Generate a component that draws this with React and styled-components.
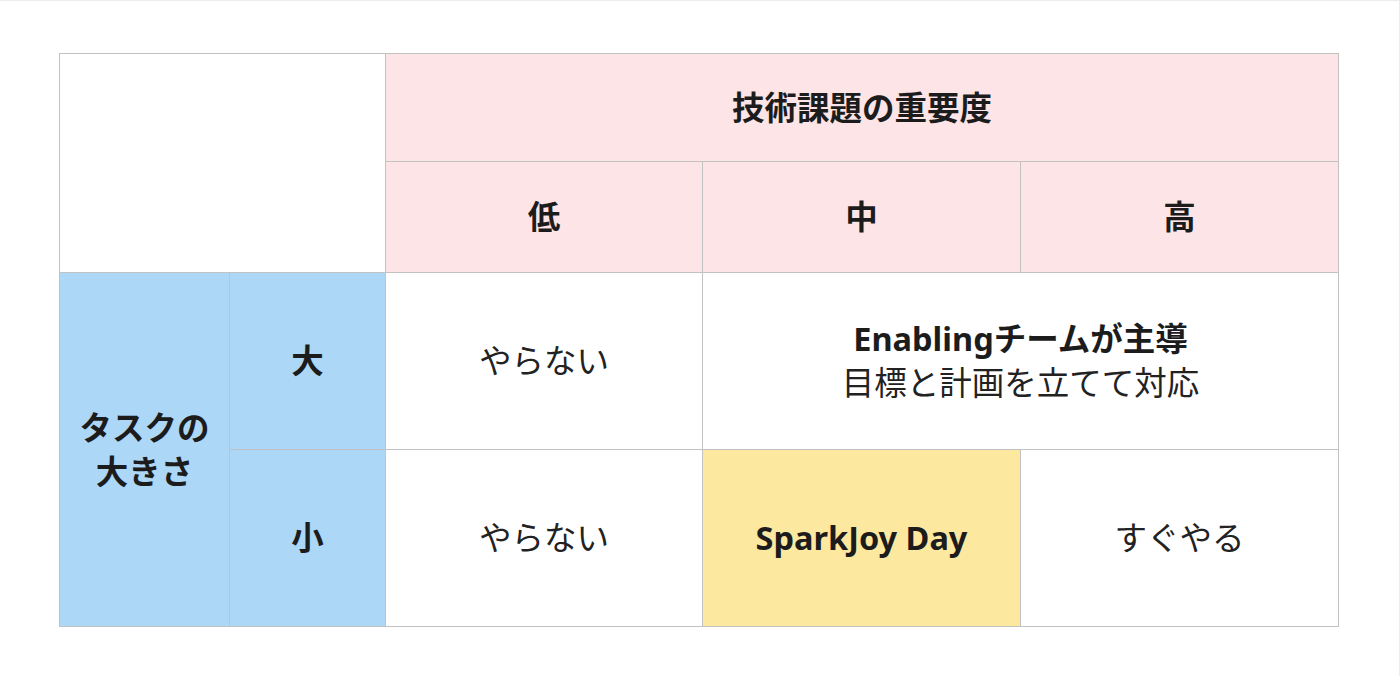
import React from 'react'
import styled, { createGlobalStyle } from 'styled-components'

const GlobalStyle = createGlobalStyle`
	html, body {
		margin: 0;
		padding: 0;
		background: #fff;
	}
	body {
		font-family: 'Noto Sans', 'Noto Sans CJK JP', sans-serif;
		color: #222;
	}
`

const Page = styled.div`
	width: 1400px;
	height: 676px;
	box-sizing: border-box;
	border-top: 1px solid #ececec;
	border-right: 1px solid #ececec;
	padding: 52px 0 0 59px;
`

const Matrix = styled.div`
	display: grid;
	grid-template-columns: 169px 155px 316px 317px 317px;
	grid-template-rows: 107px 110px 176px 176px;
	gap: 1px;
	padding: 1px;
	width: 1280px;
	box-sizing: border-box;
	background: #c2c2c2;
`

const colors = {
	white: '#ffffff',
	pink: '#fde4e6',
	blue: '#acd7f7',
	yellow: '#fde89f'
}

const Cell = styled.div`
	display: flex;
	flex-direction: column;
	align-items: center;
	justify-content: center;
	text-align: center;
	background: ${p => colors[p.tone || 'white']};
	grid-column: ${p => p.col || 'auto'};
	grid-row: ${p => p.row || 'auto'};
	font-size: 32.5px;
	line-height: 44px;
	font-weight: ${p => (p.bold ? 700 : 400)};
	color: ${p => (p.bold ? '#1c1c1c' : '#222')};
`

const Strong = styled.span`
	font-weight: 700;
	color: #1c1c1c;
`

export default function App() {
	return (
		<>
			<GlobalStyle />
			<Page>
				<Matrix>
					<Cell col="1 / 3" row="1 / 3" />
					<Cell tone="pink" bold col="3 / 6" row="1">
						技術課題の重要度
					</Cell>
					<Cell tone="pink" bold col="3" row="2">低</Cell>
					<Cell tone="pink" bold col="4" row="2">中</Cell>
					<Cell tone="pink" bold col="5" row="2">高</Cell>

					<Cell tone="blue" bold col="1" row="3 / 5">
						<span>タスクの</span>
						<span>大きさ</span>
					</Cell>
					<Cell tone="blue" bold col="2" row="3">大</Cell>
					<Cell col="3" row="3">やらない</Cell>
					<Cell col="4 / 6" row="3">
						<Strong>Enablingチームが主導</Strong>
						<span>目標と計画を立てて対応</span>
					</Cell>

					<Cell tone="blue" bold col="2" row="4">小</Cell>
					<Cell col="3" row="4">やらない</Cell>
					<Cell tone="yellow" bold col="4" row="4">SparkJoy Day</Cell>
					<Cell col="5" row="4">すぐやる</Cell>
				</Matrix>
			</Page>
		</>
	)
}
